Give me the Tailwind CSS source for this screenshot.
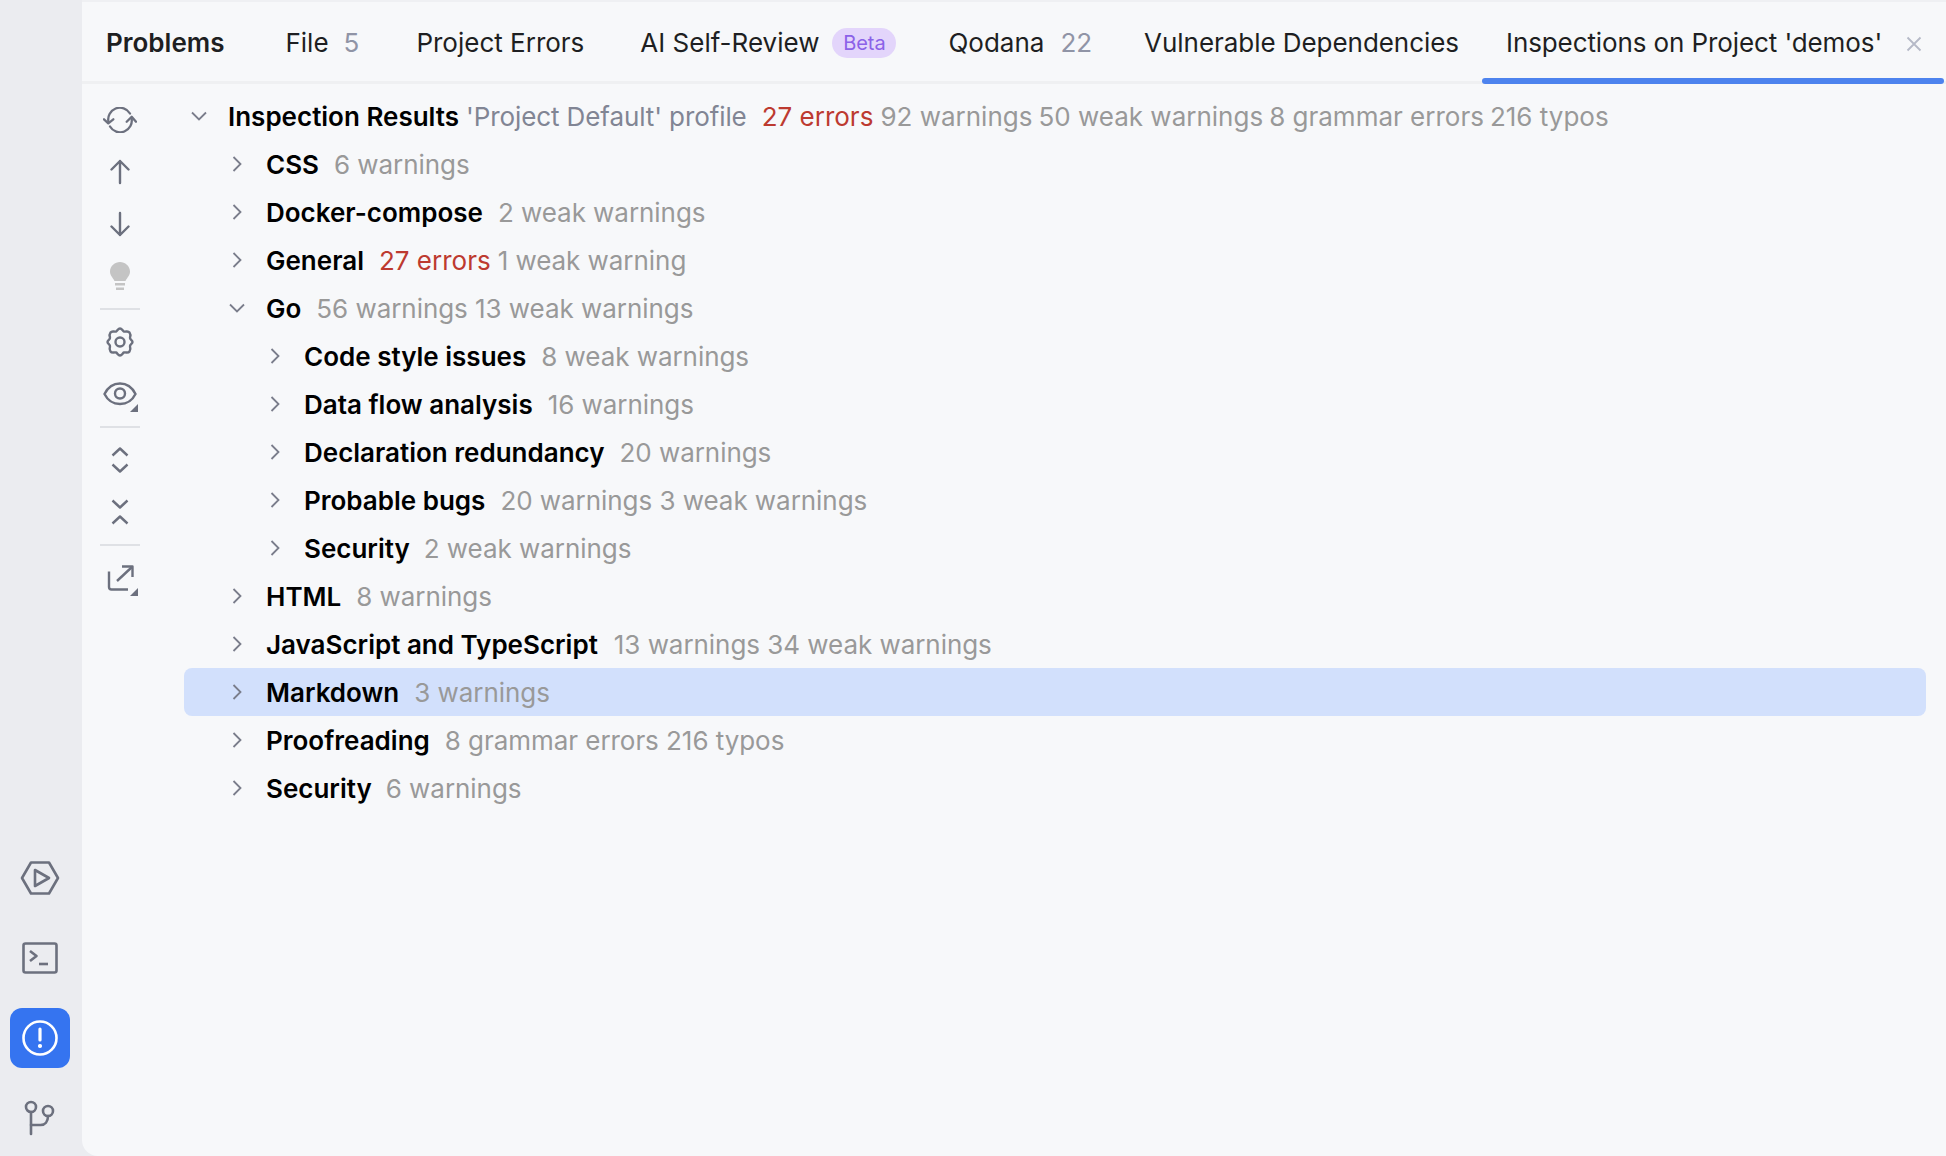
<!DOCTYPE html>
<html><head><meta charset="utf-8"><script src="https://cdn.jsdelivr.net/npm/@tailwindcss/browser@4"></script></head>
<body class="m-0 overflow-hidden">
<div class="flex w-[1946px] h-[1156px] bg-[#ebecf0] font-['Inter','Noto_Sans',sans-serif] text-[26px] leading-[48px] text-black">
  <aside class="w-[82px] shrink-0 flex flex-col items-center justify-end pb-[9px] pr-[2px]">
    <div class="w-[60px] h-[60px] flex items-center justify-center mb-[20px]">
      <svg width="40" height="36" viewBox="0 0 40 36" fill="none" stroke="#6c707e" stroke-width="2.6" stroke-linejoin="round"><path d="M11 2.500H29L38 18L29 33.500H11L2 18Z"/><path d="M15 10L29 18L15 26Z"/></svg>
    </div>
    <div class="w-[60px] h-[60px] flex items-center justify-center mb-[20px]">
      <svg width="36" height="32" viewBox="0 0 36 32" fill="none" stroke="#6c707e" stroke-width="2.600" stroke-linejoin="round"><rect x="1.500" y="1.500" width="33" height="29" rx="2"/><path d="M8 9L14.500 14L8 19"/><path d="M17 22H26"/></svg>
    </div>
    <div class="w-[60px] h-[60px] flex items-center justify-center mb-[19px] rounded-[12px] bg-[#3574f0]">
      <svg width="36" height="36" viewBox="0 0 36 36" fill="none" stroke="#fff" stroke-width="2.600" stroke-linecap="round"><circle cx="18" cy="18" r="16.500"/><path d="M18 9V20" stroke-width="3.200"/><circle cx="18" cy="26" r="1.400" fill="#fff" stroke-width="1.400"/></svg>
    </div>
    <div class="w-[60px] h-[60px] flex items-center justify-center">
      <svg width="32" height="38" viewBox="0 0 32 38" fill="none" stroke="#6c707e" stroke-width="2.600" stroke-linecap="round"><circle cx="7" cy="9" r="5"/><circle cx="24" cy="13" r="5"/><path d="M7 14V36"/><path d="M7 27H16.500C21 27 24 23.500 24 18"/></svg>
    </div>
  </aside>
  <main class="flex-1 rounded-bl-[16px] bg-[#f7f8fa] flex flex-col min-w-0 border-t-2 border-[#eff0f3]">
    <header class="relative h-[82px] flex items-center pl-[24px] pt-[2px] border-b-[3px] border-[#eff0f2] shrink-0 text-[#1e1f22]">
      <span class="font-semibold mr-[61px]">Problems</span>
      <span class="mr-[15px]">File</span><span class="text-[#9094a6] mr-[57px]">5</span>
      <span class="mr-[56px]">Project Errors</span>
      <span class="mr-[13px]">AI Self-Review</span>
      <span class="h-[30px] w-[64px] rounded-[15px] bg-[#e3d5fb] text-[#8b62e8] text-[20px] leading-[30px] text-center mr-[52px]">Beta</span>
      <span class="mr-[16px]">Qodana</span><span class="text-[#9094a6] mr-[52px]">22</span>
      <span class="mr-[47px] tracking-[-0.05px]">Vulnerable Dependencies</span>
      <span class="tracking-[-0.1px]">Inspections on Project 'demos'</span>
      <svg class="ml-[24px] mt-[2px]" width="16" height="16" viewBox="0 0 16 16" fill="none" stroke="#b5b9c7" stroke-width="1.800"><path d="M1.500 1.500L14.500 14.500M14.500 1.500L1.500 14.500"/></svg>
      <div class="absolute left-[1400px] right-[2px] -bottom-[3px] h-[6px] rounded-[3px] bg-[#4d83ee]"></div>
    </header>
    <div class="flex flex-1 min-h-0">
      <div class="w-[102px] shrink-0 flex flex-col items-center text-[#6c707e] pt-[10px] pr-[26px]">
        <div class="w-full h-[52px] flex items-center justify-center">
          <svg width="34" height="26" viewBox="0 0 34 26" fill="none" stroke="#6c707e" stroke-width="2.300" stroke-linecap="round" stroke-linejoin="round"><path d="M5.500 15A11.700 11.700 0 0 1 27 6.500"/><path d="M1 12.300L5.300 16.300L10.300 12.300"/><path d="M28.500 11A11.700 11.700 0 0 1 7 19.500"/><path d="M23.700 14.700L28.700 9.700L33 14.700"/></svg>
        </div>
        <div class="w-full h-[52px] flex items-center justify-center">
          <svg width="20" height="26" viewBox="0 0 20 26" fill="none" stroke="#6c707e" stroke-width="2.400" stroke-linecap="round" stroke-linejoin="round"><path d="M10 24V2M1.500 10.500L10 2L18.500 10.500"/></svg>
        </div>
        <div class="w-full h-[52px] flex items-center justify-center">
          <svg width="20" height="26" viewBox="0 0 20 26" fill="none" stroke="#6c707e" stroke-width="2.400" stroke-linecap="round" stroke-linejoin="round"><path d="M10 2V24M1.500 15.500L10 24L18.500 15.500"/></svg>
        </div>
        <div class="w-full h-[52px] flex items-center justify-center">
          <svg width="20" height="30" viewBox="0 0 20 30" fill="#c4c4c4"><path d="M10 1C15 1 20 5 20 10.500C20 14.500 17.500 16 15.500 20H4.500C2.500 16 0 14.500 0 10.500C0 5 5 1 10 1Z"/><rect x="5" y="22" width="10" height="2.500"/><rect x="6" y="26.500" width="8" height="2.500"/></svg>
        </div>
        <div class="w-[40px] h-[2px] bg-[#dfe1e5] mt-[6px] mb-[6px] shrink-0"></div>
        <div class="w-full h-[52px] flex items-center justify-center">
          <svg width="28" height="30" viewBox="0 0 28 30" fill="none" stroke="#6c707e" stroke-width="2.400" stroke-linejoin="round"><path d="M14 1.500C16 1.500 16.500 4 18 4.500C20 5 22 3.500 23.500 5.500C25 7.500 24.500 9 24 10.500C23.500 12.500 26.500 13 26.500 15C26.500 17 23.500 17.500 24 19.500C24.500 21 25 22.500 23.500 24.500C22 26.500 20 25 18 25.500C16.500 26 16 28.500 14 28.500C12 28.500 11.500 26 10 25.500C8 25 6 26.500 4.500 24.500C3 22.500 3.500 21 4 19.500C4.500 17.500 1.500 17 1.500 15C1.500 13 4.500 12.500 4 10.500C3.500 9 3 7.500 4.500 5.500C6 3.500 8 5 10 4.500C11.500 4 12 1.500 14 1.500Z"/><circle cx="14" cy="15" r="4.500"/></svg>
        </div>
        <div class="relative w-full h-[52px] flex items-center justify-center">
          <svg width="34" height="24" viewBox="0 0 34 24" fill="none" stroke="#6c707e" stroke-width="2.400"><path d="M1.500 12C5 5 10.500 1.500 17 1.500C23.500 1.500 29 5 32.500 12C29 19 23.500 22 17 22C10.500 22 5 19 1.500 12Z"/><circle cx="17" cy="11.500" r="5"/></svg>
          <svg class="absolute left-[48px] top-[36px]" width="8" height="8" viewBox="0 0 8 8" fill="#6c707e"><path d="M8 0V8H0Z"/></svg>
        </div>
        <div class="w-[40px] h-[2px] bg-[#dfe1e5] mt-[6px] mb-[6px] shrink-0"></div>
        <div class="w-full h-[52px] flex items-center justify-center">
          <svg width="20" height="28" viewBox="0 0 20 28" fill="none" stroke="#6c707e" stroke-width="2.400" stroke-linejoin="round"><path d="M2.500 9.500L10 2.500L17.500 9.500"/><path d="M2.500 18.500L10 25.500L17.500 18.500"/></svg>
        </div>
        <div class="w-full h-[52px] flex items-center justify-center">
          <svg width="20" height="28" viewBox="0 0 20 28" fill="none" stroke="#6c707e" stroke-width="2.400" stroke-linejoin="round"><path d="M2.500 2.500L10 9.500L17.500 2.500"/><path d="M2.500 25.500L10 18.500L17.500 25.500"/></svg>
        </div>
        <div class="w-[40px] h-[2px] bg-[#dfe1e5] mt-[6px] mb-[6px] shrink-0"></div>
        <div class="relative w-full h-[52px] flex items-center justify-center">
          <svg width="28" height="26" viewBox="0 0 28 26" fill="none" stroke="#6c707e" stroke-width="2.400" stroke-linejoin="round"><path d="M3 6.500V22C3 23.500 4 24.500 5.500 24.500H22"/><path d="M11 16L26 2"/><path d="M16 1.500H26.500V12"/></svg>
          <svg class="absolute left-[48px] top-[36px]" width="8" height="8" viewBox="0 0 8 8" fill="#6c707e"><path d="M8 0V8H0Z"/></svg>
        </div>
      </div>
      <div class="flex-1 min-w-0 pt-[8px] pr-[20px]">
        <div class="flex items-center h-[48px] pt-[2px] pl-[6px]"><svg class="w-[18px] h-[18px] mr-[20px] -mt-[2px] shrink-0" viewBox="0 0 18 18" fill="none" stroke="#7a7d8b" stroke-width="1.800"><path d="M2 5.500L9 12.500L16 5.500"/></svg><span class="font-semibold">Inspection Results</span><span class="text-[#818594] ml-[7px] tracking-[-0.1px]">'Project Default' profile</span><span class="text-[#bd3a30] ml-[15px]">27 errors</span><span class="text-[#999] ml-[7px]">92 warnings</span><span class="text-[#999] ml-[6px]">50 weak warnings</span><span class="text-[#999] ml-[6px]">8 grammar errors</span><span class="text-[#999] ml-[6px]">216 typos</span></div>

        <div class="flex items-center h-[48px] pt-[2px] pl-[44px]"><svg class="w-[18px] h-[18px] mr-[20px] -mt-[2px] shrink-0" viewBox="0 0 18 18" fill="none" stroke="#7a7d8b" stroke-width="1.800"><path d="M5.500 2L12.500 9L5.500 16"/></svg><span class="font-semibold">CSS</span><span class="text-[#999] ml-[15px] tracking-[-0.05px]">6 warnings</span></div>

        <div class="flex items-center h-[48px] pt-[2px] pl-[44px]"><svg class="w-[18px] h-[18px] mr-[20px] -mt-[2px] shrink-0" viewBox="0 0 18 18" fill="none" stroke="#7a7d8b" stroke-width="1.800"><path d="M5.500 2L12.500 9L5.500 16"/></svg><span class="font-semibold">Docker-compose</span><span class="text-[#999] ml-[15px] tracking-[-0.05px]">2 weak warnings</span></div>

        <div class="flex items-center h-[48px] pt-[2px] pl-[44px]"><svg class="w-[18px] h-[18px] mr-[20px] -mt-[2px] shrink-0" viewBox="0 0 18 18" fill="none" stroke="#7a7d8b" stroke-width="1.800"><path d="M5.500 2L12.500 9L5.500 16"/></svg><span class="font-semibold">General</span><span class="text-[#bd3a30] ml-[15px]">27 errors</span><span class="text-[#999] ml-[7px] tracking-[-0.05px]">1 weak warning</span></div>

        <div class="flex items-center h-[48px] pt-[2px] pl-[44px]"><svg class="w-[18px] h-[18px] mr-[20px] -mt-[2px] shrink-0" viewBox="0 0 18 18" fill="none" stroke="#7a7d8b" stroke-width="1.800"><path d="M2 5.500L9 12.500L16 5.500"/></svg><span class="font-semibold">Go</span><span class="text-[#999] ml-[15px] tracking-[-0.05px]">56 warnings 13 weak warnings</span></div>

        <div class="flex items-center h-[48px] pt-[2px] pl-[82px]"><svg class="w-[18px] h-[18px] mr-[20px] -mt-[2px] shrink-0" viewBox="0 0 18 18" fill="none" stroke="#7a7d8b" stroke-width="1.800"><path d="M5.500 2L12.500 9L5.500 16"/></svg><span class="font-semibold">Code style issues</span><span class="text-[#999] ml-[15px] tracking-[-0.05px]">8 weak warnings</span></div>

        <div class="flex items-center h-[48px] pt-[2px] pl-[82px]"><svg class="w-[18px] h-[18px] mr-[20px] -mt-[2px] shrink-0" viewBox="0 0 18 18" fill="none" stroke="#7a7d8b" stroke-width="1.800"><path d="M5.500 2L12.500 9L5.500 16"/></svg><span class="font-semibold">Data flow analysis</span><span class="text-[#999] ml-[15px] tracking-[-0.05px]">16 warnings</span></div>

        <div class="flex items-center h-[48px] pt-[2px] pl-[82px]"><svg class="w-[18px] h-[18px] mr-[20px] -mt-[2px] shrink-0" viewBox="0 0 18 18" fill="none" stroke="#7a7d8b" stroke-width="1.800"><path d="M5.500 2L12.500 9L5.500 16"/></svg><span class="font-semibold">Declaration redundancy</span><span class="text-[#999] ml-[15px] tracking-[-0.05px]">20 warnings</span></div>

        <div class="flex items-center h-[48px] pt-[2px] pl-[82px]"><svg class="w-[18px] h-[18px] mr-[20px] -mt-[2px] shrink-0" viewBox="0 0 18 18" fill="none" stroke="#7a7d8b" stroke-width="1.800"><path d="M5.500 2L12.500 9L5.500 16"/></svg><span class="font-semibold">Probable bugs</span><span class="text-[#999] ml-[15px] tracking-[-0.05px]">20 warnings 3 weak warnings</span></div>

        <div class="flex items-center h-[48px] pt-[2px] pl-[82px]"><svg class="w-[18px] h-[18px] mr-[20px] -mt-[2px] shrink-0" viewBox="0 0 18 18" fill="none" stroke="#7a7d8b" stroke-width="1.800"><path d="M5.500 2L12.500 9L5.500 16"/></svg><span class="font-semibold">Security</span><span class="text-[#999] ml-[14px] tracking-[-0.05px]">2 weak warnings</span></div>

        <div class="flex items-center h-[48px] pt-[2px] pl-[44px]"><svg class="w-[18px] h-[18px] mr-[20px] -mt-[2px] shrink-0" viewBox="0 0 18 18" fill="none" stroke="#7a7d8b" stroke-width="1.800"><path d="M5.500 2L12.500 9L5.500 16"/></svg><span class="font-semibold">HTML</span><span class="text-[#999] ml-[15px] tracking-[-0.05px]">8 warnings</span></div>

        <div class="flex items-center h-[48px] pt-[2px] pl-[44px]"><svg class="w-[18px] h-[18px] mr-[20px] -mt-[2px] shrink-0" viewBox="0 0 18 18" fill="none" stroke="#7a7d8b" stroke-width="1.800"><path d="M5.500 2L12.500 9L5.500 16"/></svg><span class="font-semibold">JavaScript and TypeScript</span><span class="text-[#999] ml-[16px] tracking-[-0.05px]">13 warnings 34 weak warnings</span></div>

        <div class="flex items-center h-[48px] pt-[2px] pl-[44px] rounded-[8px] bg-[#d2e0fc]"><svg class="w-[18px] h-[18px] mr-[20px] -mt-[2px] shrink-0" viewBox="0 0 18 18" fill="none" stroke="#7a7d8b" stroke-width="1.800"><path d="M5.500 2L12.500 9L5.500 16"/></svg><span class="font-semibold">Markdown</span><span class="text-[#999] ml-[15px] tracking-[-0.05px]">3 warnings</span></div>

        <div class="flex items-center h-[48px] pt-[2px] pl-[44px]"><svg class="w-[18px] h-[18px] mr-[20px] -mt-[2px] shrink-0" viewBox="0 0 18 18" fill="none" stroke="#7a7d8b" stroke-width="1.800"><path d="M5.500 2L12.500 9L5.500 16"/></svg><span class="font-semibold">Proofreading</span><span class="text-[#999] ml-[15px] tracking-[-0.05px]">8 grammar errors 216 typos</span></div>

        <div class="flex items-center h-[48px] pt-[2px] pl-[44px]"><svg class="w-[18px] h-[18px] mr-[20px] -mt-[2px] shrink-0" viewBox="0 0 18 18" fill="none" stroke="#7a7d8b" stroke-width="1.800"><path d="M5.500 2L12.500 9L5.500 16"/></svg><span class="font-semibold">Security</span><span class="text-[#999] ml-[14px] tracking-[-0.05px]">6 warnings</span></div>
      </div>
    </div>
  </main>
</div>
</body></html>
